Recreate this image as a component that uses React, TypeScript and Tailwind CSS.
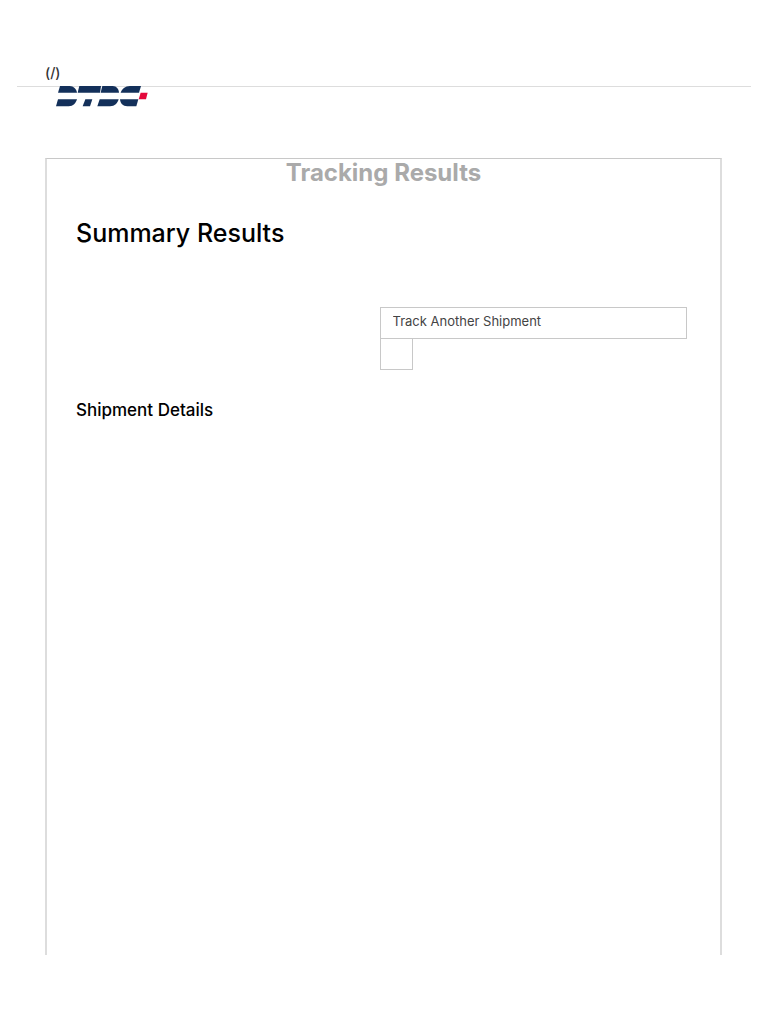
function Logo() {
  return (
    <svg viewBox="0 0 276 63" className="block h-[21px] w-[92px]" role="img" aria-label="DTDC">
      <g fill="#13305a">
        <path d="M12 0H41C53 0 61 9 63 20H6Z" />
        <path d="M6 40H63C59 52 52 61 38 61H0Z" />
        <path d="M70 0H135L132 20H65Z" />
        <path d="M88 40H109L102 61H80Z" />
        <path d="M139 0H170C182 0 188 9 189 20H134Z" />
        <path d="M131 40H188C184 52 177 61 162 61H124Z" />
        <path d="M255 0H222C207 0 198 9 194 20H249Z" />
        <path d="M192 40H247L241 61H214C200 61 193 52 192 40Z" />
      </g>
      <path d="M254 20H275L270 40H248Z" fill="#e4093b" />
    </svg>
  );
}

export default function App() {
  return (
    <div className="flex min-h-screen flex-col bg-white px-[17px] pt-16 pb-[69px] font-['Inter','Liberation_Sans',sans-serif] text-black">
      <header className="border-b border-[#dddddd] px-7 pb-1">
        <a href="/" className="block text-sm leading-[18px] font-medium text-[#333333]">
          (/)
        </a>
      </header>
      <a href="/" className="-mt-px ml-[39px] self-start">
        <Logo />
      </a>

      <main className="mt-[51px] mr-[29px] ml-7 flex grow flex-col border-x-2 border-t border-x-[#dddddd] border-t-[#c8c8c8] px-[29px]">
        <h1 className="text-center text-2xl leading-7 font-bold text-[#aaaaaa]">Tracking Results</h1>
        <h2 className="mt-7 text-[25px] leading-9 font-medium">Summary Results</h2>

        <form className="mt-14 mr-1 ml-auto w-1/2" onSubmit={(event) => event.preventDefault()}>
          <input
            type="text"
            aria-label="Track Another Shipment"
            placeholder="Track Another Shipment"
            className="block h-8 w-full border border-[#c8c8c8] px-3 pb-1 text-[13px] text-[#444444] outline-none placeholder:text-[#444444]"
          />
          <button type="submit" aria-label="Track" className="-mt-px block h-8 w-[33px] border border-[#c8c8c8]" />
        </form>

        <h3 className="mt-7 text-[17px] leading-6 font-medium">Shipment Details</h3>
      </main>
    </div>
  );
}
